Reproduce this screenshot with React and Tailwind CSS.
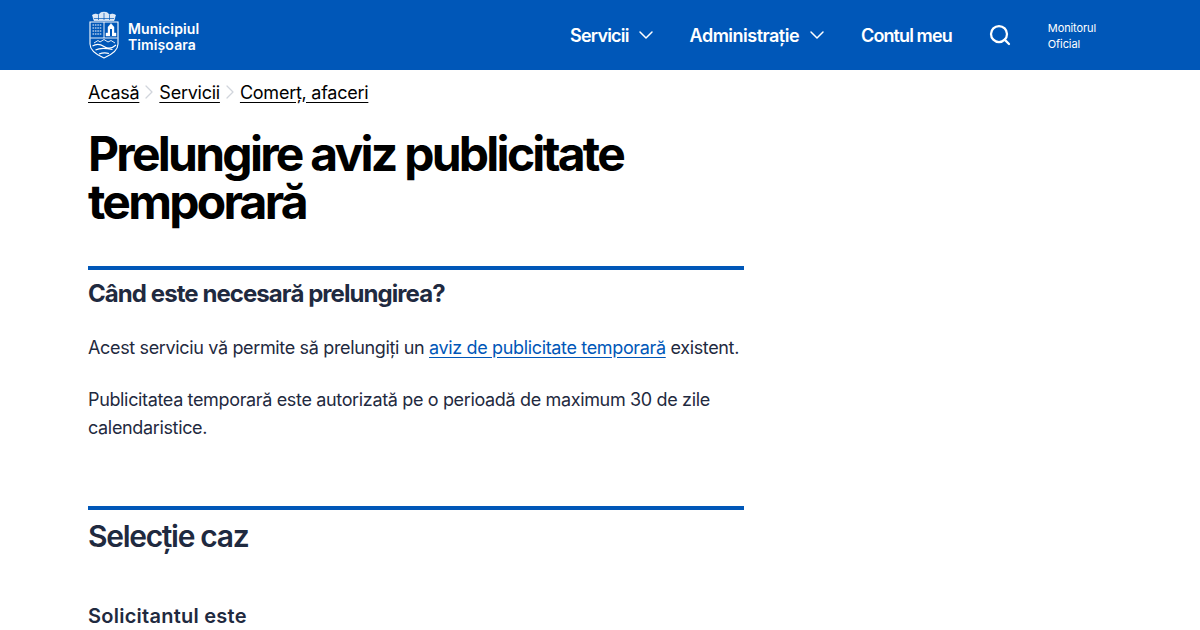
import React from 'react';
import { ChevronDown, ChevronRight, Search } from 'lucide-react';

const Crest = () => (
  <svg width="32" height="48" viewBox="0 0 32 48" fill="none" stroke="#fff" strokeWidth="1" className="shrink-0">
    {/* coroana */}
    <path d="M6 9.5 L4.5 4 Q8 2 10.5 4 Q13 0.5 16 1.2 Q19 0.5 21.5 4 Q24 2 27.5 4 L26 9.5 Z" fill="#dbe7f6" strokeWidth="0.6" />
    <path d="M6 7.5 H26 M10.5 4 V9 M16 2 V9 M21.5 4 V9" stroke="#0057b8" strokeWidth="0.7" />
    {/* scut */}
    <path d="M2 11 H30 V33 Q30 41 16 47 Q2 41 2 33 Z" strokeWidth="1.1" />
    <path d="M2.5 27 H29.5 M16 11 V27" strokeWidth="0.9" />
    <path d="M4.5 14 H14 M4.5 17 H14 M4.5 20 H14 M4.5 23 H14" strokeWidth="1.2" strokeDasharray="1.6 0.8" />
    <path d="M18 25 H28 V22 H26 V16 L23 12.5 L20 16 V22 H18 Z" fill="#fff" strokeWidth="0.4" />
    <path d="M22 18 H24 V25 H22 Z" fill="#0057b8" stroke="none" />
    <path d="M6 32 L10 29.5 L12 31 L16 28.5 L20 31 L23 29.5 L27 32" strokeWidth="0.9" />
    <path d="M4.5 35 Q10 31.5 16 35.5 T28 34 M7.5 39 Q13 36 24.5 38.5 M11 43 Q16 41 21 42.5" strokeWidth="1.1" />
  </svg>
);

const NavItem = ({ label, hasMenu, className }) => (
  <a href="#" className={`flex items-center text-[18px] font-semibold text-white ${className}`}>
    {label}
    {hasMenu && <ChevronDown size={24} strokeWidth={1.5} />}
  </a>
);

const Separator = () => <ChevronRight size={24} strokeWidth={1.25} className="-mx-[2px] text-gray-300" />;

const App = () => {
  return (
    <div className="h-[630px] overflow-hidden bg-white font-['Inter',sans-serif] text-[#1f2a40]">
      <header className="flex h-[70px] items-center justify-between bg-[#0057b8] pl-[88px] pr-[104px] text-white">
        <a href="#" className="flex items-center gap-[8px]">
          <Crest />
          <span className="pt-[4px] text-[14px] font-semibold leading-[16px] tracking-[0.1px]">
            Municipiul
            <br />
            Timișoara
          </span>
        </a>
        <nav className="flex items-center">
          <NavItem label="Servicii" hasMenu className="gap-[5px] tracking-[-0.8px]" />
          <div className="ml-[32px]"><NavItem label="Administrație" hasMenu className="gap-[6px] tracking-[-0.5px]" /></div>
          <div className="ml-[32px]"><NavItem label="Contul meu" className="tracking-[-0.9px]" /></div>
          <Search size={24} strokeWidth={2.25} className="ml-[36px]" />
          <a href="#" className="ml-[36px] pt-[2px] text-[11px] font-normal leading-[16px] tracking-[-0.1px]">
            Monitorul
            <br />
            Oficial
          </a>
        </nav>
      </header>

      <main className="w-[744px] pl-[88px] text-[18px] tracking-[-0.35px]">
        <div className="flex h-[44px] items-center tracking-[-0.25px] text-black">
          <a href="#" className="underline underline-offset-[3px]">Acasă</a>
          <Separator />
          <a href="#" className="underline underline-offset-[3px]">Servicii</a>
          <Separator />
          <a href="#" className="underline underline-offset-[3px]">Comerț, afaceri</a>
        </div>

        <h1 className="mt-[16px] text-[48px] font-bold leading-[48px] tracking-[-2.75px] text-black">
          Prelungire aviz publicitate temporară
        </h1>

        <section className="mt-[40px] border-t-4 border-[#0057b8] pt-[8px]">
          <h2 className="text-[24px] font-bold leading-[32px] tracking-[-0.93px]">Când este necesară prelungirea?</h2>
          <p className="mt-[24px] leading-[28px]">
            Acest serviciu vă permite să prelungiți un{' '}
            <a href="#" className="text-[#0057b8] underline underline-offset-[3px]">aviz de publicitate temporară</a> existent.
          </p>
          <p className="mt-[24px] leading-[28px]">
            Publicitatea temporară este autorizată pe o perioadă de maximum 30 de zile calendaristice.
          </p>
        </section>

        <section className="mt-[64px] border-t-4 border-[#0057b8] pt-[6px]">
          <h2 className="text-[30px] font-semibold leading-[40px] tracking-[-1.3px]">Selecție caz</h2>
          <h3 className="mt-[46px] text-[20px] font-semibold leading-[28px] tracking-[0.25px]">Solicitantul este</h3>
        </section>
      </main>
    </div>
  );
};

export default App;
